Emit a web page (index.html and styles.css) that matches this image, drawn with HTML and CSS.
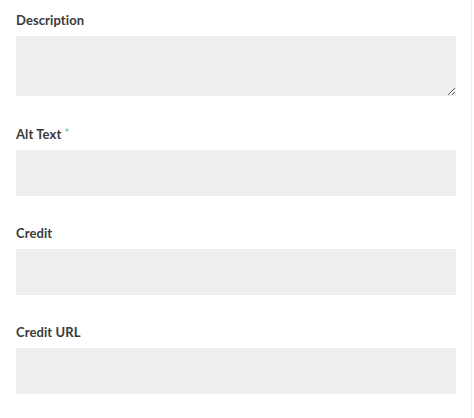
FILE: index.html
```html
<!DOCTYPE html>
<html>
<head>
<meta charset="utf-8">
<link rel="stylesheet" href="styles.css">
</head>
<body>
<div class="panel">
  <div class="field">
    <label class="label">Description</label>
    <textarea class="control textarea"></textarea>
  </div>
  <div class="field">
    <label class="label">Alt Text <span class="req">*</span></label>
    <input class="control input" type="text">
  </div>
  <div class="field">
    <label class="label">Credit</label>
    <input class="control input" type="text">
  </div>
  <div class="field">
    <label class="label">Credit URL</label>
    <input class="control input" type="text">
  </div>
</div>
</body>
</html>
```
FILE: styles.css
```css
html, body {
  margin: 0;
  padding: 0;
  background: #fff;
}
.panel {
  box-sizing: border-box;
  width: 472px;
  height: 418px;
  padding: 12px 15px 0 16px;
  border-right: 1px solid #f2f2f2;
  font-family: Lato, "Liberation Sans", sans-serif;
}
.field {
  display: flex;
  flex-direction: column;
  margin-bottom: 29px;
}
.label {
  display: block;
  font-size: 13px;
  line-height: 16px;
  font-weight: 700;
  color: #3a3a3a;
  letter-spacing: 0.1px;
  margin-bottom: 8px;
}
.req {
  color: #5fd3ad;
  font-size: 11px;
  vertical-align: 2px;
}
.control {
  display: block;
  box-sizing: border-box;
  width: 440px;
  border: none;
  outline: none;
  background: #eeeeee;
  margin: 0;
  padding: 8px;
  font-family: inherit;
  font-size: 13px;
  border-radius: 0;
}
.textarea {
  height: 60px;
  resize: vertical;
}
.input {
  height: 46px;
}
```
